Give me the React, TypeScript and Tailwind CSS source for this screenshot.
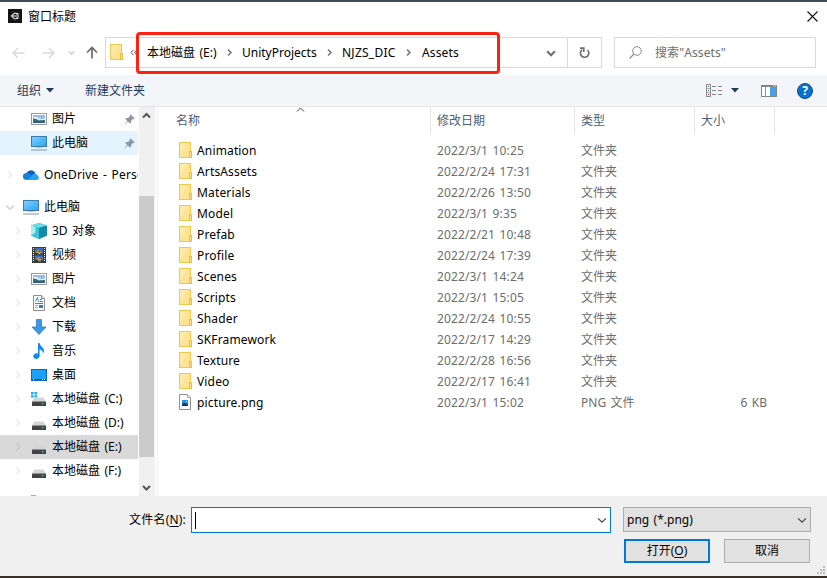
import type { ReactNode } from "react";

function Chevron({ className, dir = "right" }: { className?: string; dir?: "right" | "down" | "up" }) {
  const d = dir === "right" ? "M3 1.5 L6 4.5 L3 7.5" : dir === "down" ? "M1 3 L4.5 6.5 L8 3" : "M1 6.5 L4.5 3 L8 6.5";
  return (
    <svg viewBox="0 0 9 9" className={className} fill="none" stroke="currentColor">
      <path d={d} />
    </svg>
  );
}

function FolderIcon() {
  return (
    <svg width="14" height="17" viewBox="0 0 14 17" className="shrink-0">
      <rect x="0.5" y="0.5" width="11" height="15" fill="#ffe394" stroke="#ecc94f" />
      <path d="M1 1H9L1 13Z" fill="#ffe9a8" />
      <rect x="10.5" y="9.5" width="2" height="6" fill="#ffe08a" stroke="#e8c03c" />
    </svg>
  );
}

function PngIcon() {
  return (
    <svg width="14" height="17" viewBox="0 0 14 17" className="shrink-0">
      <path d="M0.5 0.5H8.5L11.5 3.5V15.5H0.5Z" fill="#fbfbfb" stroke="#8f9194" />
      <path d="M8.5 0.5V3.5H11.5" fill="#e3e3e3" stroke="#a9abad" />
      <rect x="3" y="6" width="6" height="6" fill="#2590e0" />
      <path d="M3 10L5.5 8.8L9 10.5V12H3Z" fill="#12356e" />
      <rect x="7" y="7" width="1" height="1" fill="#d8f0ff" />
    </svg>
  );
}

function PictureIcon() {
  return (
    <svg width="16" height="16" viewBox="0 0 16 16">
      <rect x="0.5" y="2.5" width="15" height="11" fill="#fff" stroke="#9a9a9a" />
      <rect x="2" y="4" width="12" height="8" fill="#8fc0ea" />
      <path d="M2 6.5Q5 5 8 7T14 7V9H2Z" fill="#dcebf5" />
      <path d="M2 7.5Q5 7.5 8 9.5L14 9V12H2Z" fill="#3c6f64" />
      <path d="M2 11Q8 9.5 14 11V12H2Z" fill="#2a5b8c" />
    </svg>
  );
}

function ComputerIcon() {
  return (
    <svg width="16" height="16" viewBox="0 0 16 16">
      <defs>
        <linearGradient id="screen" x1="0" y1="0" x2="1" y2="1">
          <stop offset="0" stopColor="#7fd0ff" />
          <stop offset="1" stopColor="#2ea3f5" />
        </linearGradient>
      </defs>
      <rect x="0.5" y="1.5" width="15" height="10" fill="url(#screen)" stroke="#3a7ba8" />
      <rect x="5" y="12" width="6" height="1" fill="#b9c6d0" />
      <rect x="0" y="14.5" width="16" height="1" fill="#7f98ad" />
    </svg>
  );
}

function OneDriveIcon() {
  return (
    <svg width="16" height="16" viewBox="0 0 16 16">
      <path d="M3.5 6A5 5 0 0 1 12.5 6.2L9 9L3 8Z" fill="#0f5fb8" />
      <path d="M3.4 13A3.5 3.5 0 0 1 3.5 6Q5.5 5.7 7 7L11 11L9 13Z" fill="#1383d9" />
      <path d="M6 11.5L10 7.8Q12 5.8 14 7.8Q16 9 16 11Q15.5 13 13.5 13H4Q3 13 2 12.5Z" fill="#29a3ea" />
    </svg>
  );
}

function CubeIcon() {
  return (
    <svg width="16" height="16" viewBox="0 0 16 16">
      <path d="M8 0L16 2.5V12.5L8 16L0 12.5V2.5Z" fill="#1fa9c0" />
      <path d="M8 0L16 2.5L8 5L0 2.5Z" fill="#67dbe6" />
      <path d="M0 2.5L8 5V16L0 12.5Z" fill="#3cc4d6" />
      <path d="M0 2.5L4.5 4V9.5L0 12.5Z" fill="#a8f0f2" />
      <path d="M8 5L16 2.5V12.5L8 16Z" fill="#128ba6" />
    </svg>
  );
}

function VideoIcon() {
  return (
    <svg width="16" height="16" viewBox="0 0 16 16">
      <rect x="1" y="0" width="14" height="16" fill="#3a3a3a" />
      <path d="M2.5 1V15M13.5 1V15" stroke="#f2f2f2" strokeWidth="1" strokeDasharray="1 1" />
      <rect x="4" y="1" width="8" height="6.5" fill="#3a6fc4" />
      <rect x="4" y="8.5" width="8" height="6.5" fill="#3a6fc4" />
      <path d="M5 5L7.5 3L11 5.5L9 7H6Z" fill="#d9a520" />
      <path d="M5.5 12L8 10L10.5 11L10 13.5H7Z" fill="#d9a520" />
      <path d="M7 4H9.5V5H7ZM8 11H10.5V12H8Z" fill="#b53a2a" />
      <path d="M4 6H7V7.5H4ZM9 6.5H12V7.5H9ZM4 13H7V15H4ZM10 13.5H12V15H10Z" fill="#23402f" />
    </svg>
  );
}

function DocumentIcon() {
  return (
    <svg width="16" height="16" viewBox="0 0 16 16">
      <path d="M2.5 0.5H10.5L13.5 3.5V15.5H2.5Z" fill="#fff" stroke="#8b8f94" />
      <path d="M10.5 0.5V3.5H13.5" fill="#e4e4e4" stroke="#8b8f94" />
      <path d="M4.5 6.5L6.5 2.5L7.5 6.5M9 4.5H11M8.5 6.5H12M4 8.5H12" stroke="#2f8bd0" fill="none" />
      <path d="M4 10.5H7M4 12.5H7" stroke="#a5adb5" />
      <rect x="8" y="10" width="4" height="3" fill="#2f7fae" />
    </svg>
  );
}

function DownloadIcon() {
  return (
    <svg width="16" height="16" viewBox="0 0 16 16">
      <path d="M5.5 0.5H10.5V8H15L8 15.5L1 8H5.5Z" fill="#3c97e6" stroke="#2a7cc4" strokeWidth="0.8" />
    </svg>
  );
}

function MusicIcon() {
  return (
    <svg width="16" height="16" viewBox="0 0 16 16">
      <path d="M7 0H8.5Q8.7 2.4 11 4Q14.5 6.8 11.8 11Q12.3 7.5 8.6 6.3V12.8A3.2 2.8 -15 1 1 7 10.6Z" fill="#0c8cec" />
    </svg>
  );
}

function DesktopIcon() {
  return (
    <svg width="16" height="16" viewBox="0 0 16 16">
      <rect x="0.5" y="2.5" width="15" height="11" fill="#1ca0fa" stroke="#0c69b4" />
      <path d="M1 12.5H15" stroke="#0a5a9f" />
      <path d="M2 12.5H3M11 12.5H12M13 12.5H14" stroke="#fff" />
    </svg>
  );
}

function DriveIcon({ system }: { system?: boolean }) {
  return (
    <svg width="16" height="16" viewBox="0 0 16 16">
      <path d="M3.5 6.5H12.5L15 10.5H1Z" fill="#d3d5d7" />
      <rect x="1" y="10.5" width="14" height="4.5" rx="0.6" fill="#414446" />
      <path d="M1.5 10.6H14.5" stroke="#8d9092" strokeWidth="0.8" />
      <rect x="11" y="12" width="1.5" height="1.5" fill="#25e045" />
      {system && (
        <>
          <rect x="0" y="0" width="6.5" height="7" fill="#fff" />
          <path d="M0 1H2.6V3.4H0ZM3.4 1H6V3.4H3.4ZM0 4.2H2.6V6.6H0ZM3.4 4.2H6V6.6H3.4Z" fill="#12b0ee" />
        </>
      )}
    </svg>
  );
}

function PinIcon() {
  return (
    <svg width="11" height="11" viewBox="0 0 11 11" className="shrink-0">
      <path d="M6.5 0.3L10.7 4.5L9.7 5.2L8.9 5L7.1 7L7 9L6 9.6L3.9 7.4L0.6 10.5L0.4 10.3L3.3 6.9L1.3 4.9L2 4L4 3.9L6 2.1L5.8 1.2Z" fill="#8a97a4" />
    </svg>
  );
}

type TreeItem = { label: string; icon: ReactNode; row: string; chevron?: "right" | "down"; pin?: boolean };

const tree: TreeItem[] = [
  { label: "图片", icon: <PictureIcon />, row: "pl-[15px]", pin: true },
  { label: "此电脑", icon: <ComputerIcon />, row: "pl-[15px] bg-[#e5f3ff]", pin: true },
  { label: "OneDrive - Personal", icon: <OneDriveIcon />, row: "pl-[7px] mt-2 tracking-[0.15px]", chevron: "right" },
  { label: "此电脑", icon: <ComputerIcon />, row: "pl-[7px] mt-2", chevron: "down" },
  { label: "3D 对象", icon: <CubeIcon />, row: "pl-[15px]", chevron: "right" },
  { label: "视频", icon: <VideoIcon />, row: "pl-[15px]", chevron: "right" },
  { label: "图片", icon: <PictureIcon />, row: "pl-[15px]", chevron: "right" },
  { label: "文档", icon: <DocumentIcon />, row: "pl-[15px]", chevron: "right" },
  { label: "下载", icon: <DownloadIcon />, row: "pl-[15px]", chevron: "right" },
  { label: "音乐", icon: <MusicIcon />, row: "pl-[15px]", chevron: "right" },
  { label: "桌面", icon: <DesktopIcon />, row: "pl-[15px]", chevron: "right" },
  { label: "本地磁盘 (C:)", icon: <DriveIcon system />, row: "pl-[15px]", chevron: "right" },
  { label: "本地磁盘 (D:)", icon: <DriveIcon />, row: "pl-[15px]", chevron: "right" },
  { label: "本地磁盘 (E:)", icon: <DriveIcon />, row: "pl-[15px] bg-[#d9d9d9]", chevron: "right" },
  { label: "本地磁盘 (F:)", icon: <DriveIcon />, row: "pl-[15px]", chevron: "right" },
];

const files = [
  ["Animation", "2022/3/1 10:25"],
  ["ArtsAssets", "2022/2/24 17:31"],
  ["Materials", "2022/2/26 13:50"],
  ["Model", "2022/3/1 9:35"],
  ["Prefab", "2022/2/21 10:48"],
  ["Profile", "2022/2/24 17:39"],
  ["Scenes", "2022/3/1 14:24"],
  ["Scripts", "2022/3/1 15:05"],
  ["Shader", "2022/2/24 10:55"],
  ["SKFramework", "2022/2/17 14:29"],
  ["Texture", "2022/2/28 16:56"],
  ["Video", "2022/2/17 16:41"],
  ["picture.png", "2022/3/1 15:02", "PNG 文件", "6 KB"],
];

function TitleBar() {
  return (
    <header className="flex h-[28px] shrink-0 items-center pl-2 pr-[9px]">
      <svg width="14" height="14" viewBox="0 0 14 14">
        <rect width="14" height="14" fill="#151515" />
        <path d="M3.4 7L6.6 4L10 4.6V9.4L6.6 10Z" fill="none" stroke="#e6e6e6" strokeWidth="1.1" />
        <path d="M4 7H7.4L9.6 5M7.4 7L9.6 9" fill="none" stroke="#e6e6e6" />
      </svg>
      <span className="ml-1.5 mt-0.5">窗口标题</span>
      <svg width="11" height="11" viewBox="0 0 11 11" className="ml-auto" stroke="#111" fill="none">
        <path d="M0.5 0.5L10.5 10.5M10.5 0.5L0.5 10.5" strokeWidth="1.1" />
      </svg>
    </header>
  );
}

function Navigation() {
  return (
    <nav className="relative flex h-[45px] shrink-0 items-center pl-3 pr-[11px]">
      <svg width="13" height="12" viewBox="0 0 13 12" fill="none" stroke="#d9d9d9" strokeWidth="1.5">
        <path d="M12.5 6H1M6 1L1 6L6 11" />
      </svg>
      <svg width="13" height="12" viewBox="0 0 13 12" fill="none" stroke="#d9d9d9" strokeWidth="1.5" className="ml-[17px]">
        <path d="M0.5 6H12M7 1L12 6L7 11" />
      </svg>
      <Chevron dir="down" className="ml-[13px] mr-px size-[7px] stroke-2 text-[#d4d4d4]" />
      <svg width="12" height="13" viewBox="0 0 12 13" fill="none" stroke="#6a6a6a" strokeWidth="1.7" className="ml-2.5">
        <path d="M6 12.5V1.5M1 6.5L6 1.5L11 6.5" />
      </svg>
      <div className="ml-[7px] flex h-[31px] w-[497px] items-center border border-[#d9d9d9] pl-1">
        <FolderIcon />
        <svg width="8" height="7" viewBox="0 0 8 7" fill="none" stroke="#555" className="ml-1.5">
          <path d="M3.5 0.8L1 3.5L3.5 6.2M7 0.8L4.5 3.5L7 6.2" />
        </svg>
        <span className="ml-[9px] w-[78px] whitespace-nowrap">本地磁盘 (E:)</span>
        <Chevron className="size-[9px] stroke-[1.6] text-[#777]" />
        <span className="ml-2 w-[83px] whitespace-nowrap">UnityProjects</span>
        <Chevron className="size-[9px] stroke-[1.6] text-[#777]" />
        <span className="ml-2 w-[62px] whitespace-nowrap tracking-[0.25px]">NJZS_DIC</span>
        <Chevron className="size-[9px] stroke-[1.6] text-[#777]" />
        <span className="ml-[9px] tracking-[0.15px]">Assets</span>
        <div className="ml-auto flex w-8 justify-center">
          <Chevron dir="down" className="size-[10px] stroke-2 text-[#707070]" />
        </div>
        <div className="flex h-full w-[34px] items-center justify-center border-l border-[#d9d9d9]">
          <svg width="11" height="13" viewBox="0 0 11 13" fill="none" stroke="#707070" strokeWidth="1.7">
            <path d="M8.5 4A4.2 4.2 0 1 1 3 3.8" />
            <path d="M1 2.2H4.8V6" />
          </svg>
        </div>
      </div>
      <div className="ml-3 flex h-[31px] flex-1 items-center border border-[#d9d9d9] pl-3.5 text-[#6d6d6d]">
        <svg width="13" height="13" viewBox="0 0 13 13" fill="none" stroke="#8a8a96">
          <circle cx="8" cy="5" r="4.3" />
          <path d="M5 8L0.5 12.5" strokeWidth="1.3" />
        </svg>
        <span className="ml-[13px] tracking-[0.1px]">搜索"Assets"</span>
      </div>
      <div className="absolute left-[136px] top-[2px] h-[42px] w-[364px] rounded-[4px] border-[3px] border-[#ff2113]" />
    </nav>
  );
}

function Toolbar() {
  return (
    <div className="flex h-8 shrink-0 items-center border-b border-[#e5e5e7] bg-[#f4f5f8] pl-[17px] pr-[14px] text-[#1e395b]">
      <span>组织</span>
      <svg width="8" height="5" viewBox="0 0 8 5" className="ml-[5px] mr-px">
        <path d="M0 0H8L4 4.5Z" fill="#1e395b" />
      </svg>
      <span className="ml-[30px]">新建文件夹</span>
      <svg width="16" height="13" viewBox="0 0 16 13" className="ml-auto" fill="none">
        <rect x="0.5" y="0.5" width="4" height="12" stroke="#8b8b8b" />
        <path d="M1 4.5H4M1 8.5H4" stroke="#aaa" />
        <path d="M2 2.5H3M2 6.5H3" stroke="#4070b0" />
        <path d="M2 10.5H3" stroke="#c83030" />
        <path d="M6 2.5H10M12 2.5H16M6 6.5H10M12 6.5H16M6 10.5H10M12 10.5H16" stroke="#888" />
      </svg>
      <svg width="8" height="5" viewBox="0 0 8 5" className="ml-[9px]">
        <path d="M0 0H8L4 4.5Z" fill="#1e395b" />
      </svg>
      <svg width="16" height="12" viewBox="0 0 16 12" className="ml-[22px]" fill="none">
        <rect x="0.5" y="0.5" width="15" height="11" fill="#fff" stroke="#858585" />
        <path d="M0 1H16" stroke="#858585" strokeWidth="2" />
        <path d="M4.5 2V12" stroke="#909090" />
        <rect x="9" y="2" width="6" height="9" fill="#43a0e8" />
        <path d="M12 1H13M14 1H15" stroke="#fff" />
      </svg>
      <div className="ml-5 flex size-4 items-center justify-center rounded-full border border-[#074b8f] bg-[#0870cf] text-[12px] leading-none font-bold text-white">?</div>
    </div>
  );
}

function Sidebar() {
  return (
    <aside className="flex w-[158px] shrink-0 border-r border-[#f0f0f0]">
      <div className="w-[138px] overflow-hidden">
        {tree.map((item, i) => (
          <div key={i} className={`flex h-6 items-center whitespace-nowrap ${item.row}`}>
            <div className="-ml-[2px] flex w-[18px] shrink-0 items-center">
              {item.chevron && <Chevron dir={item.chevron} className={item.chevron === "down" ? "size-[10px] stroke-[1.5] text-[#d6d6d6]" : "size-[10px] stroke-[1.4] text-[#000]/8"} />}
            </div>
            <div className="size-4 shrink-0">{item.icon}</div>
            <span className="ml-[5px]">{item.label}</span>
            {item.pin && (
              <div className="ml-auto mr-[3px]">
                <PinIcon />
              </div>
            )}
          </div>
        ))}
        <div className="ml-[31px] mt-[12px] h-[2px] w-[5px] bg-[#7fb6cf]" />
      </div>
      <div className="ml-px flex w-4 flex-col bg-[#f0f0f0]">
        <div className="flex h-[89px] pl-[3px] pt-[4px]">
          <Chevron dir="up" className="size-[9px] stroke-2 text-[#555]" />
        </div>
        <div className="h-[261px] w-[15px] bg-[#cbcbcb]" />
        <Chevron dir="down" className="mb-[4px] ml-[3px] mt-auto size-[9px] stroke-2 text-[#555]" />
      </div>
    </aside>
  );
}

function FileList() {
  return (
    <section className="min-w-0 flex-1">
      <div className="relative flex h-[27px] items-center text-[#4c607a]">
        <div className="flex h-full w-[273px] items-center border-r border-[#e5e5e5] pl-[18px]">名称</div>
        <div className="flex h-full w-[144px] items-center border-r border-[#e5e5e5] pl-1.5">修改日期</div>
        <div className="flex h-full w-[120px] items-center border-r border-[#e5e5e5] pl-1.5">类型</div>
        <div className="flex h-full w-20 items-center border-r border-[#e5e5e5] pl-1.5">大小</div>
        <Chevron dir="up" className="absolute left-[138px] top-[-2px] size-[9px] stroke-1 text-[#444]" />
      </div>
      <div className="pt-[6px]">
        {files.map(([name, date, type = "文件夹", size]) => (
          <div key={name} className="flex h-[21px] items-center pl-[21px] text-[#6d6d6d]">
            {size ? <PngIcon /> : <FolderIcon />}
            <span className="ml-[4px] w-[240px] tracking-[0.15px] text-black">{name}</span>
            <span className="w-[144px] tracking-[0.12px]">{date}</span>
            <span className="w-[120px]">{type}</span>
            <span className="w-[66px] text-right">{size}</span>
          </div>
        ))}
      </div>
    </section>
  );
}

function Footer() {
  return (
    <footer className="relative h-[80px] shrink-0 bg-[#f0f0f0] pt-[11px]">
      <div className="flex items-start">
        <label className="flex h-[26px] w-[191px] items-center justify-end pr-[5px] tracking-[0.2px]">
          文件名(<span className="underline underline-offset-2">N</span>):
        </label>
        <div className="flex h-[26px] w-[420px] items-center border border-[#0078d7] bg-white pl-[3px] pr-[3px]">
          <div className="h-[17px] w-px bg-black" />
          <Chevron dir="down" className="ml-auto size-[10px] stroke-[1.1] text-[#444]" />
        </div>
        <div className="ml-3 flex h-[25px] w-[188px] items-center border border-[#adadad] bg-[#e1e1e1] pl-[3px] pr-[3px]">
          <span>png (*.png)</span>
          <Chevron dir="down" className="ml-auto size-[10px] stroke-[1.1] text-[#444]" />
        </div>
      </div>
      <div className="mt-1.5 flex justify-end gap-3.5 pr-[17px]">
        <button className="flex h-6 w-[86px] items-center justify-center border-2 border-[#0078d7] bg-[#e1e1e1]">
          打开(<span className="underline underline-offset-2">O</span>)
        </button>
        <button className="flex h-6 w-[86px] items-center justify-center border border-[#adadad] bg-[#e1e1e1]">取消</button>
      </div>
      <svg width="8" height="8" viewBox="0 0 8 8" className="absolute bottom-[2px] right-[2px]" fill="#bcbcbc">
        <path d="M0 6h2v2H0zM3 6h2v2H3zM6 6h2v2H6zM3 3h2v2H3zM6 3h2v2H6zM6 0h2v2H6z" />
      </svg>
    </footer>
  );
}

export default function App() {
  return (
    <div className="flex h-[578px] w-[827px] flex-col overflow-hidden border-b-2 border-t-2 border-b-[#3b3027] border-t-[#404b5a] bg-white font-['Noto_Sans','Noto_Sans_CJK_SC',sans-serif] text-[12px] leading-[16px] text-black [word-spacing:1.3px]">
      <TitleBar />
      <Navigation />
      <Toolbar />
      <main className="flex h-[389px] shrink-0 overflow-hidden">
        <Sidebar />
        <FileList />
      </main>
      <Footer />
    </div>
  );
}
